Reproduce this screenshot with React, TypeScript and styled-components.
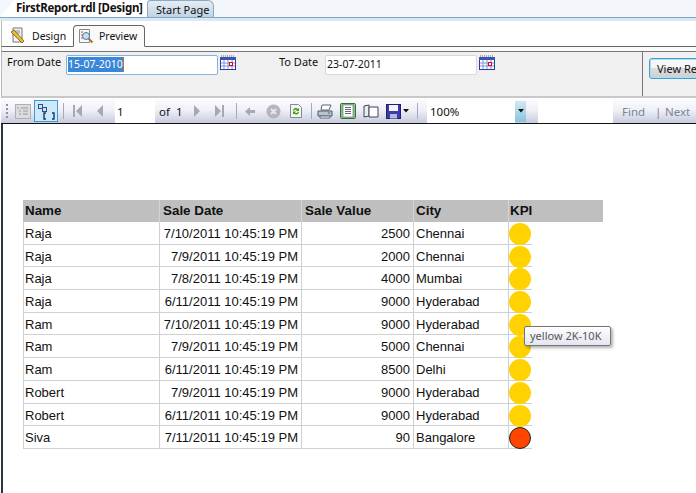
import React from "react";
import styled, { createGlobalStyle } from "styled-components";

const Global = createGlobalStyle`
  html, body { margin: 0; padding: 0; background: #fff; }
  body { font-family: "Noto Sans", "Liberation Sans", sans-serif; }
`;

const Page = styled.div`
  position: relative;
  width: 696px;
  height: 493px;
  overflow: hidden;
  display: flex;
  flex-direction: column;
  background: #fff;
  color: #111;
`;

const DocStrip = styled.div`
  height: 17px;
  flex: none;
  display: flex;
  background: #f3f6fb;
  align-items: flex-end;
`;

const ActiveDocTab = styled.div`
  width: 147px;
  height: 17px;
  padding-left: 16px;
  box-sizing: border-box;
  background: #fff;
  font: bold 11.5px/15px "Noto Sans", sans-serif;
  letter-spacing: -0.28px;
  white-space: nowrap;
  clip-path: polygon(0 100%, 14px 0, 100% 0, 100% 100%);
`;

const DocTab = styled.div`
  width: 67px;
  height: 17px;
  box-sizing: border-box;
  padding-left: 8px;
  border: 1px solid #8fa9bd;
  border-bottom: none;
  border-radius: 4px 6px 0 0;
  background: linear-gradient(#e4edf5, #bfd3e3);
  font: 11px/18px "Noto Sans", sans-serif;
  white-space: nowrap;
`;

const BlueRule = styled.div`
  height: 4px;
  flex: none;
  box-sizing: border-box;
  border-top: 1px solid #7ba7c5;
  background: #dce8f3;
`;

const ViewTabs = styled.div`
  height: 26px;
  flex: none;
  box-sizing: border-box;
  margin-left: 1px;
  border-left: 1px solid #b8b8b8;
  border-bottom: 1px solid #666;
  display: flex;
  align-items: flex-end;
  background: #fff;
`;

const ViewTab = styled.div<{ $active?: boolean; $width: number }>`
  width: ${(p) => p.$width}px;
  height: 22px;
  box-sizing: border-box;
  margin-bottom: -1px;
  display: flex;
  align-items: center;
  gap: ${(p) => (p.$active ? 5 : 6)}px;
  padding-left: ${(p) => (p.$active ? 4 : 8)}px;
  font-size: 10.5px;
  ${(p) =>
    p.$active
      ? `border: 1px solid #666; border-bottom: 1px solid #fafafa; border-radius: 4px 4px 0 0; background: #fafafa;`
      : `border-bottom: 1px solid #666;`}
`;

const Gap = styled.div`
  height: 4px;
  flex: none;
  background: #fafafa;
  border-bottom: 1px solid #777;
  margin-left: 1px;
  border-left: 1px solid #b8b8b8;
`;

const Params = styled.div`
  height: 44px;
  flex: none;
  display: flex;
  background: #f0f0f0;
  border-bottom: 2px solid #c8c8c8;
  margin-left: 1px;
  border-left: 1px solid #b8b8b8;
`;

const ParamFields = styled.div`
  width: 641px;
  flex: none;
  display: flex;
  align-items: flex-start;
  padding: 3px 0 0 5px;
  box-sizing: border-box;
  border-right: 1px solid #777;
`;

const ParamLabel = styled.span<{ $width: number }>`
  width: ${(p) => p.$width}px;
  flex: none;
  font-size: 11px;
  line-height: 14px;
  white-space: nowrap;
`;

const DateInput = styled.div<{ $focus?: boolean }>`
  width: 152px;
  height: 20px;
  flex: none;
  box-sizing: border-box;
  background: #fff;
  border: 1px solid ${(p) => (p.$focus ? "#7fb4dc" : "#d8d8d8")};
  border-radius: 2px;
  padding: 1px;
  font-size: 10.5px;
  line-height: 15px;
`;

const Selected = styled.span`
  display: inline-block;
  background: #3a86d8;
  color: #fff;
  line-height: 15px;
  border-right: 1px solid #c86a20;
`;

const Spacer = styled.div<{ $width: number }>`
  width: ${(p) => p.$width}px;
  flex: none;
`;

const ButtonArea = styled.div`
  flex: 1;
  padding: 6px 0 0 6px;
  overflow: hidden;
`;

const ViewButton = styled.button`
  display: block;
  width: 70px;
  height: 21px;
  box-sizing: border-box;
  border: 1px solid #3f9fd0;
  box-shadow: inset 0 0 0 1px #a8e0f5;
  border-radius: 3px;
  background: linear-gradient(#f6f6f6 45%, #dcdcdc 50%, #cfcfcf);
  padding: 0 0 0 7px;
  text-align: left;
  white-space: nowrap;
  font: 11px "Noto Sans", sans-serif;
  color: #111;
`;

const Toolbar = styled.div`
  height: 24px;
  flex: none;
  margin-top: 1px;
  display: flex;
  align-items: center;
  background: linear-gradient(#fbfbfe, #f0f1f8 45%, #c6cbdd);
  border-bottom: 1px solid #111;
  margin-left: 1px;
  font-size: 11px;
  position: relative;
`;

const Grip = styled.div`
  width: 2px;
  height: 14px;
  margin: 0 6px 0 5px;
  flex: none;
  background: repeating-linear-gradient(#8b93a8 0 2px, transparent 2px 4px);
`;

const Tool = styled.div<{ $width: number; $on?: boolean }>`
  width: ${(p) => p.$width}px;
  height: 100%;
  flex: none;
  display: flex;
  align-items: center;
  justify-content: center;
  ${(p) => (p.$on ? `height: 22px; box-sizing: border-box; background: #cde8f8; border: 1px solid #3d9ad6;` : "")}
`;

const Sep = styled.div<{ $left: number; $right: number }>`
  width: 1px;
  height: 16px;
  flex: none;
  background: #a4a9bb;
  margin: 0 ${(p) => p.$right}px 0 ${(p) => p.$left}px;
`;

const ToolInput = styled.div<{ $width: number; $pad: number }>`
  width: ${(p) => p.$width}px;
  height: 23px;
  flex: none;
  box-sizing: border-box;
  background: #fff;
  padding-left: ${(p) => p.$pad}px;
  font-size: 11.5px;
  line-height: 23px;
`;

const ToolText = styled.span<{ $width: number }>`
  width: ${(p) => p.$width}px;
  flex: none;
  font-size: 11.5px;
`;

const ComboArrow = styled.div`
  width: 11px;
  height: 21px;
  flex: none;
  background: linear-gradient(#d4e9f5, #88c3e0);
  display: flex;
  align-items: center;
  justify-content: center;
`;

const WhiteFill = styled.div<{ $width: number }>`
  width: ${(p) => p.$width}px;
  height: 23px;
  flex: none;
  background: #fff;
`;

const FindLink = styled.span<{ $width: number }>`
  width: ${(p) => p.$width}px;
  flex: none;
  color: #7d8496;
  font-size: 11.5px;
`;

const Report = styled.div`
  flex: 1;
  margin-left: 1px;
  border-left: 2px solid #2b3540;
  padding: 76px 0 0 20px;
  background: #fff;
`;

const Table = styled.div`
  width: 580px;
  font-family: "Liberation Sans", Arial, sans-serif;
  font-size: 13px;
`;

const HeaderRow = styled.div`
  display: grid;
  grid-template-columns: 136px 142px 112px 95px 95px;
  height: 22px;
  background: #bfbfbf;
  font-weight: bold;
  font-size: 13.4px;
  line-height: 21px;
`;

const HeaderCell = styled.div<{ $pad: number }>`
  padding-left: ${(p) => p.$pad}px;
  border-left: 1px solid #d4d4d4;
  &:first-child { border-left: none; }
`;

const Row = styled.div`
  display: grid;
  grid-template-columns: 137px 142px 112px 95px 23px;
  width: 509px;
  height: 22.7px;
  box-sizing: border-box;
  line-height: 23px;
  border-bottom: 1px solid #d0d0d0;
`;

const Cell = styled.div<{ $right?: boolean }>`
  padding: 0 3px 0 2px;
  border-right: 1px solid #d0d0d0;
  white-space: nowrap;
  text-align: ${(p) => (p.$right ? "right" : "left")};
  &:first-child { border-left: 1px solid #d0d0d0; padding-left: 1px; }
`;

const KpiCell = styled.div`
  position: relative;
`;

const Lamp = styled.div<{ $red?: boolean }>`
  position: absolute;
  left: 0;
  top: 1px;
  width: 22px;
  height: 22px;
  box-sizing: border-box;
  border-radius: 50%;
  background: ${(p) => (p.$red ? "#ff4500" : "#ffd200")};
  ${(p) => (p.$red ? "border: 1px solid #222;" : "")}
`;

const Tooltip = styled.div`
  position: absolute;
  left: 524px;
  top: 326px;
  width: 87px;
  height: 20px;
  box-sizing: border-box;
  border: 1px solid #767676;
  border-radius: 2px;
  background: linear-gradient(#fff, #e4e5f0);
  box-shadow: 2px 2px 3px rgba(0, 0, 0, 0.3);
  color: #575757;
  font-size: 11px;
  line-height: 17px;
  padding-left: 5px;
  white-space: nowrap;
`;

const CalendarIcon = () => (
  <svg width="17" height="16" viewBox="0 0 17 16" style={{ flex: "none", marginLeft: 2 }}>
    <rect x="0.5" y="2.5" width="15" height="12" fill="#fff" stroke="#2a3f8f" />
    <rect x="0" y="2" width="16" height="3" fill="#3b55b5" />
    <path d="M1 1h14" stroke="#666" strokeDasharray="1 1" />
    <path d="M4 5v9M8 5v9M12 5v9M1 8h14M1 11h14" stroke="#7d92e0" />
    <rect x="9.5" y="7.5" width="3" height="3" fill="#fff" stroke="#e01010" />
  </svg>
);

const DesignIcon = () => (
  <svg width="16" height="17" viewBox="0 0 16 17">
    <path d="M3 1h9v14H3z" fill="#f4f4f0" stroke="#777" />
    <path d="M5 4h5M5 6h5M5 8h3" stroke="#889" />
    <path d="M1 5l3-2 10 11-2 2z" fill="#e8b93a" stroke="#7a5a10" strokeWidth="0.8" />
  </svg>
);

const PreviewIcon = () => (
  <svg width="16" height="17" viewBox="0 0 16 17">
    <path d="M1.5 1.5h10v13h-10z" fill="#f8f8f8" stroke="#8a8a8a" />
    <path d="M3 4h2M3 7h2M3 10h2" stroke="#d05030" />
    <circle cx="8" cy="8" r="3.5" fill="#bfe0f5" stroke="#5a7a9a" />
    <path d="M10.5 10.5l4 4" stroke="#a8762a" strokeWidth="2" />
  </svg>
);

const DocMapIcon = () => (
  <svg width="16" height="15" viewBox="0 0 16 15">
    <rect x="0.5" y="0.5" width="15" height="14" fill="#dcdcdc" stroke="#b0b0b0" />
    <path d="M2 4h2M6 4h7M4 7h2M8 7h5M4 10h2M8 10h5" stroke="#9a9a9a" />
  </svg>
);

const ParamsIcon = () => (
  <svg width="18" height="17" viewBox="0 0 18 17">
    <rect x="1.5" y="1.5" width="4" height="4" fill="#cfe0f5" stroke="#2a4f8f" />
    <rect x="5.5" y="4.5" width="4" height="4" fill="#cfe0f5" stroke="#2a4f8f" />
    <path d="M9 10H7v6h2M15 10h2v6h-2" fill="none" stroke="#1a3a6a" strokeWidth="1.4" />
  </svg>
);

const First = () => (
  <svg width="11" height="12" viewBox="0 0 11 12"><path d="M1 0h2v12H1zM10 0v12L4 6z" fill="#a6a9b3" /></svg>
);
const Prev = () => (
  <svg width="8" height="12" viewBox="0 0 8 12"><path d="M7 0v12L1 6z" fill="#a6a9b3" /></svg>
);
const Next = () => (
  <svg width="8" height="12" viewBox="0 0 8 12"><path d="M1 0v12l6-6z" fill="#a6a9b3" /></svg>
);
const Last = () => (
  <svg width="11" height="12" viewBox="0 0 11 12"><path d="M8 0h2v12H8zM1 0v12l6-6z" fill="#a6a9b3" /></svg>
);
const Back = () => (
  <svg width="10" height="9" viewBox="0 0 10 9"><path d="M5 0v3h5v3H5v3L0 4.5z" fill="#a6a9b3" /></svg>
);
const Stop = () => (
  <svg width="15" height="15" viewBox="0 0 15 15">
    <circle cx="7.5" cy="7.5" r="7" fill="#b4b6bc" />
    <path d="M5 5l5 5M10 5l-5 5" stroke="#e8e8e8" strokeWidth="2" />
  </svg>
);
const Refresh = () => (
  <svg width="14" height="16" viewBox="0 0 14 16">
    <path d="M1.5 1.5h8l3 3v10h-11z" fill="#f6f6e8" stroke="#7a8a9a" />
    <path d="M4 7a3 3 0 0 1 5-1l1-1v3H7l1-1a2 2 0 0 0-3 1zM10 9.5a3 3 0 0 1-5 1l-1 1v-3h3l-1 1a2 2 0 0 0 3-1z" fill="#3a9a1a" />
  </svg>
);
const Print = () => (
  <svg width="16" height="15" viewBox="0 0 16 15">
    <path d="M5 1h9l-2 5H4z" fill="#fff" stroke="#667" />
    <path d="M1 7h14v5H1z" fill="#b8c4d4" stroke="#4a5a6a" />
    <path d="M3 12h10v2H3z" fill="#fff" stroke="#667" />
    <path d="M11 9h2" stroke="#2a8a2a" />
  </svg>
);
const Layout = () => (
  <svg width="16" height="16" viewBox="0 0 16 16">
    <rect x="0.5" y="0.5" width="15" height="15" rx="1" fill="#8cc08c" stroke="#3a6a3a" />
    <rect x="3" y="2" width="10" height="12" fill="#fff" stroke="#667" strokeWidth="0.6" />
    <path d="M5 4.5h6M5 6.5h6M5 8.5h6M5 10.5h6" stroke="#667" />
  </svg>
);
const PageSetup = () => (
  <svg width="16" height="14" viewBox="0 0 16 14">
    <path d="M1 2l5-1v11l-5 1z" fill="#e8eef4" stroke="#445" />
    <path d="M6 3h9v10H6z" fill="#fff" stroke="#445" />
  </svg>
);
const Save = () => (
  <svg width="15" height="15" viewBox="0 0 15 15">
    <rect x="0.5" y="0.5" width="14" height="14" fill="#3c3ca8" stroke="#22226a" />
    <rect x="3" y="1" width="9" height="6" fill="#f4f4fa" />
    <rect x="4" y="10" width="7" height="4.5" fill="#b8b8d8" />
  </svg>
);
const Caret = () => (
  <svg width="6" height="4" viewBox="0 0 6 4"><path d="M0 0h6L3 3.5z" fill="#111" /></svg>
);

const headers: [string, number][] = [
  ["Name", 2],
  ["Sale Date", 3],
  ["Sale Value", 3],
  ["City", 2],
  ["KPI", 1],
];

const rows: [string, string, string, string, boolean?][] = [
  ["Raja", "7/10/2011 10:45:19 PM", "2500", "Chennai"],
  ["Raja", "7/9/2011 10:45:19 PM", "2000", "Chennai"],
  ["Raja", "7/8/2011 10:45:19 PM", "4000", "Mumbai"],
  ["Raja", "6/11/2011 10:45:19 PM", "9000", "Hyderabad"],
  ["Ram", "7/10/2011 10:45:19 PM", "9000", "Hyderabad"],
  ["Ram", "7/9/2011 10:45:19 PM", "5000", "Chennai"],
  ["Ram", "6/11/2011 10:45:19 PM", "8500", "Delhi"],
  ["Robert", "7/9/2011 10:45:19 PM", "9000", "Hyderabad"],
  ["Robert", "6/11/2011 10:45:19 PM", "9000", "Hyderabad"],
  ["Siva", "7/11/2011 10:45:19 PM", "90", "Bangalore", true],
];

export default function App() {
  return (
    <Page>
      <Global />
      <DocStrip>
        <ActiveDocTab>FirstReport.rdl [Design]</ActiveDocTab>
        <DocTab>Start Page</DocTab>
      </DocStrip>
      <BlueRule />
      <ViewTabs>
        <ViewTab $width={71}>
          <DesignIcon />
          Design
        </ViewTab>
        <ViewTab $width={72} $active>
          <PreviewIcon />
          Preview
        </ViewTab>
      </ViewTabs>
      <Gap />
      <Params>
        <ParamFields>
          <ParamLabel $width={59}>From Date</ParamLabel>
          <DateInput $focus>
            <Selected>15-07-2010</Selected>
          </DateInput>
          <CalendarIcon />
          <Spacer $width={42} />
          <ParamLabel $width={46}>To Date</ParamLabel>
          <DateInput>23-07-2011</DateInput>
          <CalendarIcon />
        </ParamFields>
        <ButtonArea>
          <ViewButton>View Report</ViewButton>
        </ButtonArea>
      </Params>
      <Toolbar>
        <Grip />
        <Tool $width={18}><DocMapIcon /></Tool>
        <Spacer $width={2} />
        <Tool $width={24} $on><ParamsIcon /></Tool>
        <Sep $left={5} $right={4} />
        <Tool $width={18}><First /></Tool>
        <Tool $width={28}><Prev /></Tool>
        <Spacer $width={1} />
        <ToolInput $width={40} $pad={2}>1</ToolInput>
        <Spacer $width={4} />
        <ToolText $width={17}>of</ToolText>
        <ToolText $width={10}>1</ToolText>
        <Tool $width={21}><Next /></Tool>
        <Tool $width={24}><Last /></Tool>
        <Sep $left={5} $right={4} />
        <Tool $width={18}><Back /></Tool>
        <Tool $width={28}><Stop /></Tool>
        <Tool $width={17}><Refresh /></Tool>
        <Sep $left={7} $right={3} />
        <Tool $width={19}><Print /></Tool>
        <Tool $width={28}><Layout /></Tool>
        <Tool $width={17}><PageSetup /></Tool>
        <Spacer $width={6} />
        <Tool $width={16}><Save /></Tool>
        <Spacer $width={1} />
        <Tool $width={7}><Caret /></Tool>
        <Sep $left={8} $right={9} />
        <ToolInput $width={88} $pad={3}>100%</ToolInput>
        <ComboArrow><Caret /></ComboArrow>
        <Spacer $width={12} />
        <WhiteFill $width={75} />
        <Spacer $width={9} />
        <FindLink $width={33}>Find</FindLink>
        <FindLink $width={10}>|</FindLink>
        <FindLink $width={30}>Next</FindLink>
      </Toolbar>
      <Report>
        <Table>
          <HeaderRow>
            {headers.map(([h, pad]) => (
              <HeaderCell key={h} $pad={pad}>{h}</HeaderCell>
            ))}
          </HeaderRow>
          {rows.map((r, i) => (
            <Row key={i}>
              <Cell>{r[0]}</Cell>
              <Cell $right>{r[1]}</Cell>
              <Cell $right>{r[2]}</Cell>
              <Cell>{r[3]}</Cell>
              <KpiCell><Lamp $red={r[4]} /></KpiCell>
            </Row>
          ))}
        </Table>
      </Report>
      <Tooltip>yellow 2K-10K</Tooltip>
    </Page>
  );
}
